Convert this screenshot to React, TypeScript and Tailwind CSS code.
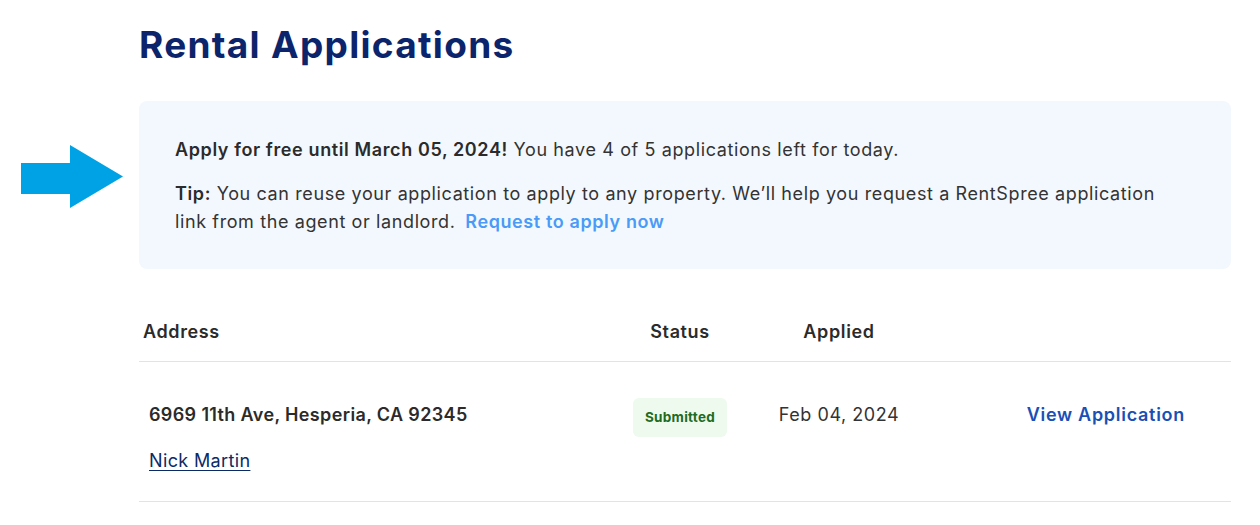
import React from 'react';

const FONT = "font-['Inter',sans-serif]";

// ─── Left pointer arrow (annotation) ──────────────────────────────────────────
function PointerArrow() {
  return (
    <svg
      className="absolute left-[-118px] top-[44px]"
      width="103"
      height="63"
      viewBox="0 0 103 63"
    >
      <path d="M0 18 H49 V0 L102 31.5 L49 63 V49 H0 Z" fill="#00a2e6" />
    </svg>
  );
}

// ─── Info banner ─────────────────────────────────────────────────────────────
function InfoBanner() {
  return (
    <div className="relative rounded-lg bg-[#f3f8fe] pl-[36px] pr-[52px] pt-[35px] pb-[33px] text-[18px] leading-[28px] tracking-[0.034em] text-[#333333]">
      <PointerArrow />
      <p>
        <span className="font-semibold text-[#2b2b2b]">Apply for free until March 05, 2024!</span>{' '}
        You have 4 of 5 applications left for today.
      </p>
      <p className="mt-[16px]">
        <span className="font-semibold text-[#2b2b2b]">Tip:</span> You can reuse your application to apply to any
        property. We’ll help you request a RentSpree application link from the agent or landlord.{' '}
        <a href="#" className="ml-[4px] font-semibold text-[#4a9bf7]">Request to apply now</a>
      </p>
    </div>
  );
}

// ─── Applications table ──────────────────────────────────────────────────────
function ApplicationsTable() {
  return (
    <div className="mt-[34px]">
      <div className="flex h-[59px] items-center border-b border-[#e3e3e3] pb-[1px] text-[18px] font-semibold tracking-[0.035em] text-[#2b2b2b]">
        <div className="w-[481px] pl-[4px]">Address</div>
        <div className="w-[120px] text-center">Status</div>
        <div className="w-[198px] text-center">Applied</div>
        <div className="flex-1" />
      </div>

      <div className="flex h-[140px] border-b border-[#e3e3e3] pt-[40px]">
        <div className="w-[481px] pl-[10px]">
          <div className="text-[18px] leading-[26px] font-semibold tracking-[0.02em] text-[#2b2b2b]">
            6969 11th Ave, Hesperia, CA 92345
          </div>
          <a
            href="#"
            className="mt-[20px] block text-[18px] leading-[26px] tracking-[0.02em] text-[#0b2b66] underline underline-offset-[3px]"
          >
            Nick Martin
          </a>
        </div>
        <div className="flex w-[120px] justify-center">
          <span className="mt-[-4px] flex h-[39px] w-[94px] items-center justify-center rounded-md bg-[#eefaee] text-[13.5px] font-bold tracking-[0.02em] text-[#1f6b1f]">
            Submitted
          </span>
        </div>
        <div className="w-[198px] text-center text-[18px] leading-[26px] tracking-[0.03em] text-[#333333]">
          Feb 04, 2024
        </div>
        <div className="flex-1 pr-[46px] text-right">
          <a href="#" className="text-[18px] leading-[26px] font-semibold tracking-[0.04em] text-[#1a4fb5]">
            View Application
          </a>
        </div>
      </div>
    </div>
  );
}

export default function App() {
  return (
    <div className={`${FONT} min-h-[525px] bg-white pl-[139px] pr-[29px] pt-[21px]`}>
      <h1 className="text-[37px] leading-[48px] font-bold tracking-[0.035em] text-[#0b246b]">
        Rental Applications
      </h1>
      <div className="mt-[32px]">
        <InfoBanner />
      </div>
      <ApplicationsTable />
    </div>
  );
}
